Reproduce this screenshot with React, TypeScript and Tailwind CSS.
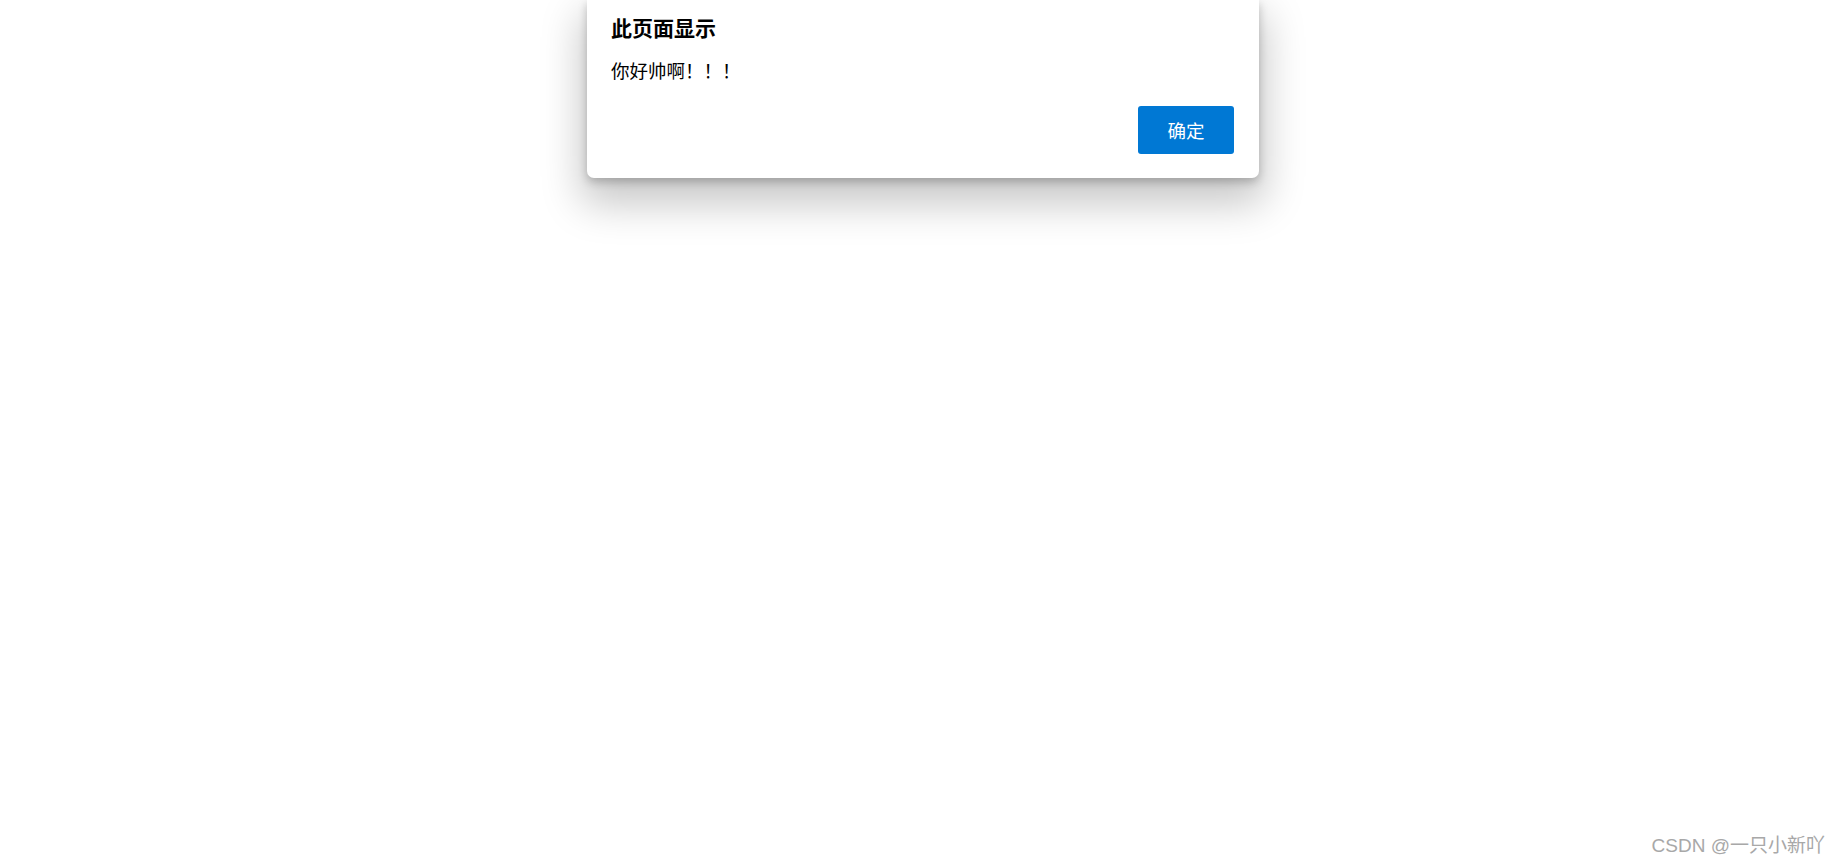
import React from "react";

export default function App() {
  return (
    <div
      className="relative w-[1838px] h-[865px] bg-white overflow-hidden"
      style={{ fontFamily: '"Noto Sans CJK SC", "Liberation Sans", sans-serif' }}
    >
      <div className="flex pl-[587px]">
        <div className="w-[672px] bg-white rounded-b-[7px] shadow-[0_20px_40px_6px_rgba(0,0,0,0.22),0_4px_10px_rgba(0,0,0,0.22)] pl-[24px] pr-[25px] pt-[15px] pb-[24px] flex flex-col">
          <div className="text-[21px] leading-[24px] font-bold text-black">此页面显示</div>
          <div className="mt-[19px] text-[18.5px] leading-[24px] text-black">你好帅啊！！！</div>
          <div className="mt-[24px] flex justify-end">
            <button className="w-[96px] h-[48px] bg-[#0078d4] rounded-[3px] text-white text-[18.5px] leading-[24px]">
              确定
            </button>
          </div>
        </div>
      </div>
      <div
        className="absolute right-[13px] bottom-[7px] text-[19px] leading-[24px] text-[#a8a8a8]"
        style={{ fontFamily: '"Liberation Sans", "Noto Sans CJK SC", sans-serif' }}
      >
        CSDN @一只小新吖
      </div>
    </div>
  );
}
